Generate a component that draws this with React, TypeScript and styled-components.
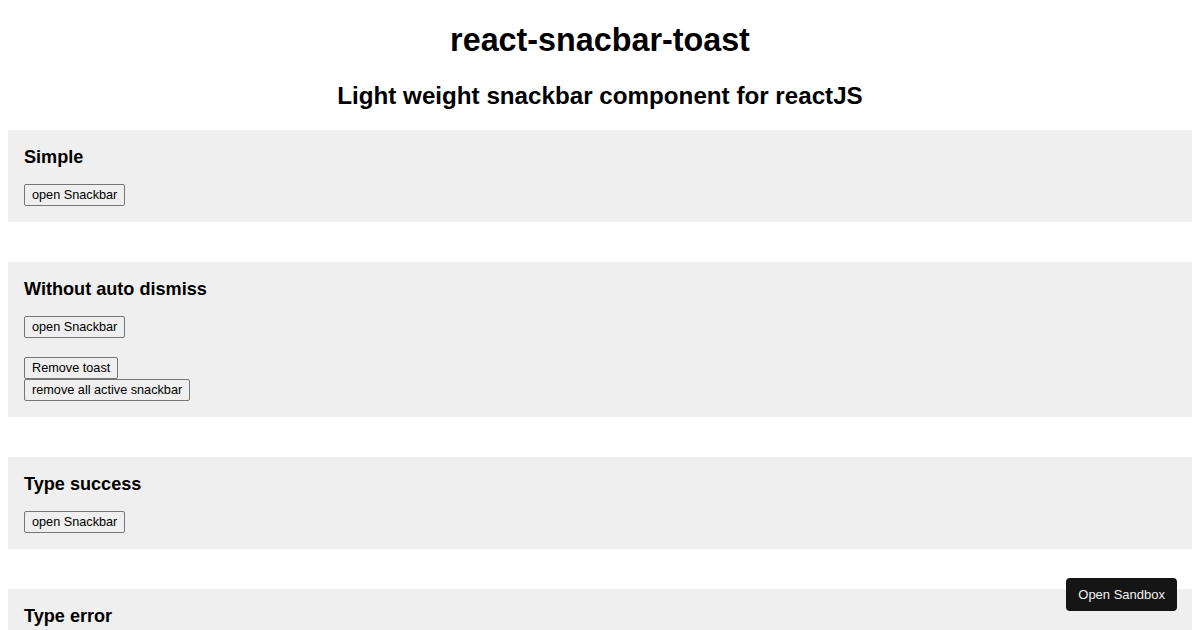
import styled, { createGlobalStyle } from 'styled-components';

const GlobalStyle = createGlobalStyle`
	body {
		margin: 8px;
		font-family: 'Liberation Sans', Arial, sans-serif;
		color: #000;
		background: #fff;
	}
`;

const sections = [
	{ title: 'Simple', extra: false },
	{ title: 'Without auto dismiss', extra: true },
	{ title: 'Type success', extra: false },
	{ title: 'Type error', extra: false },
	{ title: 'Type warning', extra: false },
];

const App = () => {
	return (
		<>
			<GlobalStyle />
			<Title>react-snacbar-toast</Title>
			<Subtitle>Light weight snackbar component for reactJS</Subtitle>
			<List>
				{sections.map((s) => (
					<Section key={s.title}>
						<SectionTitle>{s.title}</SectionTitle>
						<div>
							<Button>open Snackbar</Button>
						</div>
						{s.extra && (
							<Extra>
								<div>
									<Button>Remove toast</Button>
								</div>
								<div>
									<Button>remove all active snackbar</Button>
								</div>
							</Extra>
						)}
					</Section>
				))}
			</List>
			<SandboxButton>Open Sandbox</SandboxButton>
		</>
	);
};

export default App;

const Title = styled.h1`
	margin: 13.5px 0 23.5px;
	font-size: 32.3px;
	font-weight: 700;
	text-align: center;
`;

const Subtitle = styled.h2`
	margin: 19.92px 0;
	font-size: 24.2px;
	font-weight: 700;
	text-align: center;
`;

const List = styled.div`
	display: flex;
	flex-direction: column;
	gap: 40px;
`;

const Section = styled.section`
	background: #efefef;
	padding: 16px;
`;

const SectionTitle = styled.h3`
	margin: 0 0 16px;
	font-size: 18.1px;
	font-weight: 700;
	line-height: 22px;
`;

const Extra = styled.div`
	margin-top: 19px;
`;

const Button = styled.button`
	font-family: 'Liberation Sans', Arial, sans-serif;
	font-size: 12.7px;
	line-height: 16px;
	color: #000;
	background: #efefef;
	border: 1px solid #767676;
	border-radius: 2px;
	padding: 2px 7px;
	cursor: pointer;
`;

const SandboxButton = styled.button`
	position: fixed;
	right: 23px;
	bottom: 19px;
	height: 33px;
	padding: 0 12px;
	background: #151515;
	color: #f2f2f2;
	border: none;
	border-radius: 4px;
	font-family: 'Liberation Sans', Arial, sans-serif;
	font-size: 13px;
	cursor: pointer;
`;
